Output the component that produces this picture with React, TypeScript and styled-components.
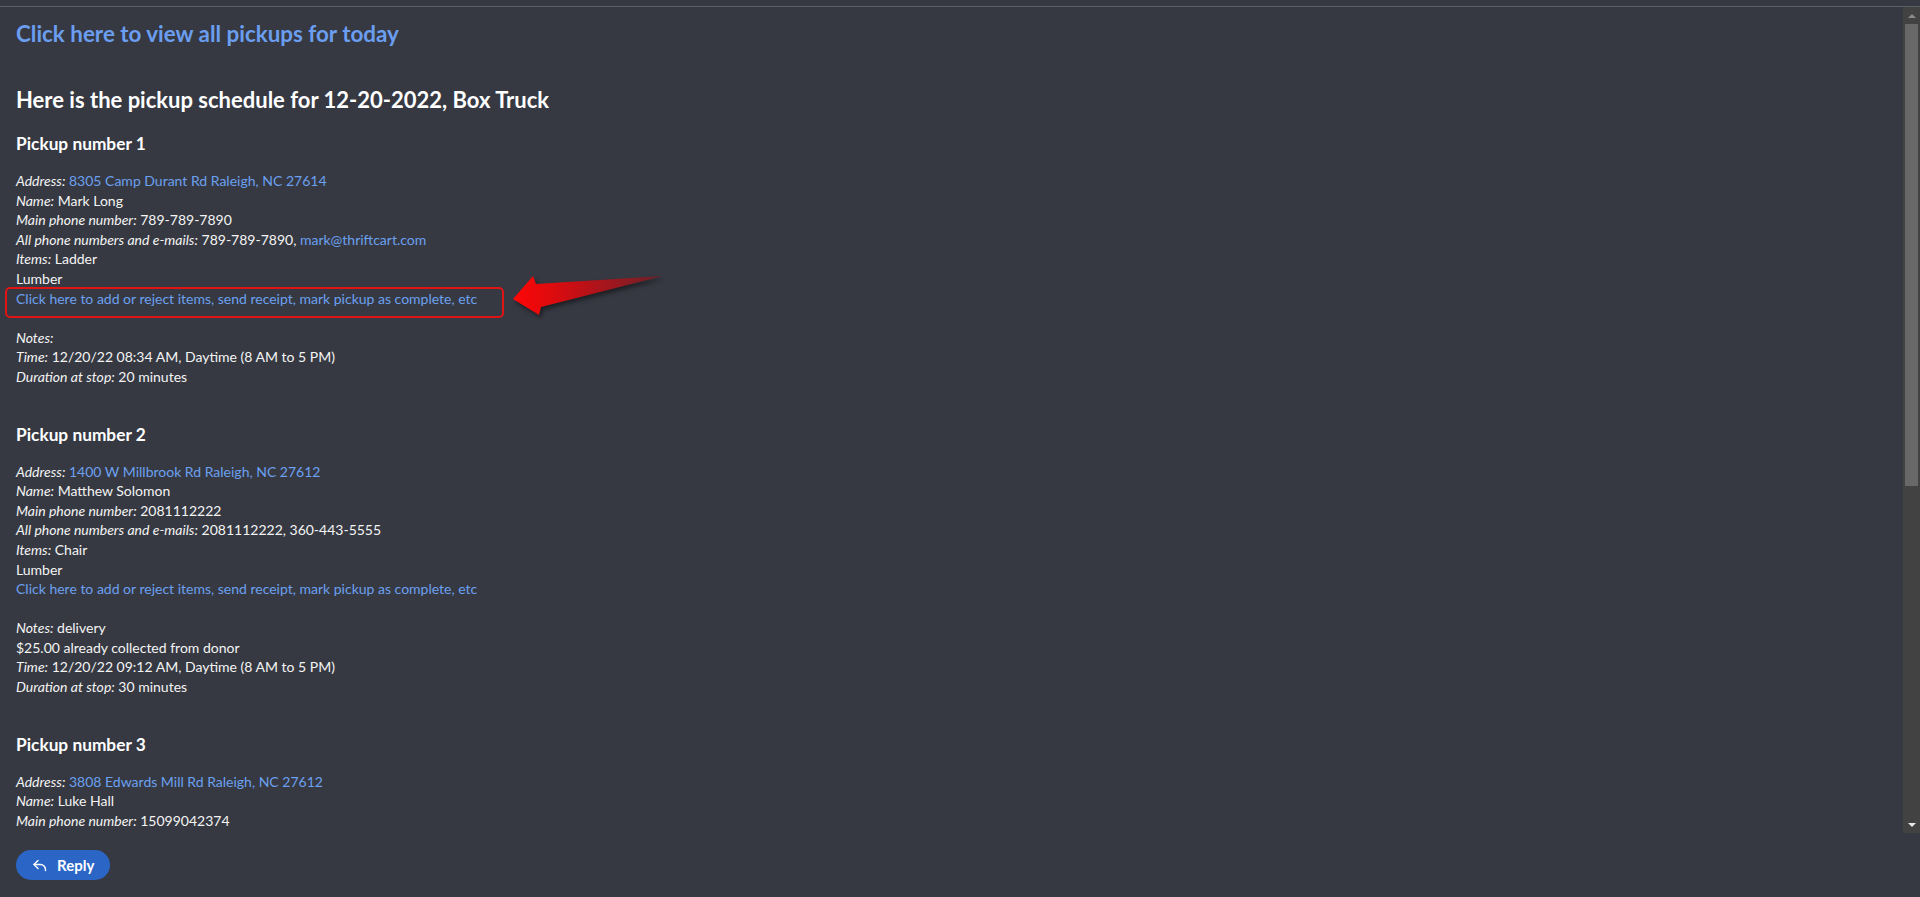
import React from 'react';
import styled, { createGlobalStyle } from 'styled-components';

const GlobalStyle = createGlobalStyle`
  html, body {
    margin: 0;
    padding: 0;
    background: #363942;
    overflow: hidden;
  }
  * {
    box-sizing: border-box;
  }
`

const FONT = `'Lato', 'Noto Sans', sans-serif`

type Pickup = {
  address: string;
  name: string;
  mainPhone: string;
  allPhones?: string;
  email?: string;
  items?: string[];
  notes?: string;
  extra?: string;
  time?: string;
  duration?: string;
  highlighted?: boolean;
};

const pickups: Pickup[] = [
  {
    address: '8305 Camp Durant Rd Raleigh, NC 27614',
    name: 'Mark Long',
    mainPhone: '789-789-7890',
    allPhones: '789-789-7890, ',
    email: 'mark@thriftcart.com',
    items: ['Ladder', 'Lumber'],
    notes: '',
    time: '12/20/22 08:34 AM, Daytime (8 AM to 5 PM)',
    duration: '20 minutes',
    highlighted: true,
  },
  {
    address: '1400 W Millbrook Rd Raleigh, NC 27612',
    name: 'Matthew Solomon',
    mainPhone: '2081112222',
    allPhones: '2081112222, 360-443-5555',
    items: ['Chair', 'Lumber'],
    notes: 'delivery',
    extra: '$25.00 already collected from donor',
    time: '12/20/22 09:12 AM, Daytime (8 AM to 5 PM)',
    duration: '30 minutes',
  },
  {
    address: '3808 Edwards Mill Rd Raleigh, NC 27612',
    name: 'Luke Hall',
    mainPhone: '15099042374',
  },
];

const Page = styled.div`
  height: 897px;
  display: flex;
  flex-direction: column;
  padding-top: 6px;
  font-family: ${FONT};
  color: #f4f4f4;
`

const Rule = styled.div`
  height: 1px;
  background: #5c5f67;
`

const Viewport = styled.div`
  height: 828px;
  display: flex;
  flex-direction: row;
  overflow: hidden;
`

const Content = styled.div`
  flex: 1;
  padding: 14px 16px 0;
  overflow: hidden;
`

const TopLink = styled.a`
  display: block;
  font-size: 22.4px;
  line-height: 26px;
  font-weight: 700;
  color: #6b9ef0;
  text-decoration: none;
`

const Title = styled.h2`
  margin: 40px 0 0;
  font-size: 22px;
  line-height: 26px;
  font-weight: 700;
  color: #ffffff;
`

const Section = styled.section<{ $first?: boolean }>`
  margin-top: ${p => (p.$first ? '21px' : '38px')};
`

const Heading = styled.h3`
  margin: 0;
  font-size: 17.3px;
  line-height: 20px;
  font-weight: 700;
  color: #ffffff;
`

const Details = styled.div`
  margin-top: 17px;
  font-size: 14px;
`

const Line = styled.div`
  height: 19.6px;
  line-height: 19.6px;
  white-space: nowrap;
`

const Label = styled.em`
  font-style: italic;
`

const Link = styled.a`
  color: #6ca0f0;
  text-decoration: none;
`

const Highlight = styled.span`
  position: relative;
  display: inline-block;
  height: 19.6px;

  &::before {
    content: '';
    position: absolute;
    left: -11px;
    top: -2px;
    width: 495px;
    height: 27px;
    border: 2px solid #e01414;
    border-radius: 5px;
  }
`

const Pointer = styled.svg`
  position: absolute;
  left: 489px;
  top: -24px;
  width: 175px;
  height: 62px;
  overflow: visible;
  filter: drop-shadow(2px 3px 2px rgba(0, 0, 0, 0.45));
`

const Scrollbar = styled.div`
  width: 17px;
  background: #424242;
  display: flex;
  flex-direction: column;
  align-items: center;
`

const ScrollArrow = styled.div<{ $down?: boolean }>`
  height: 17px;
  width: 100%;
  display: flex;
  align-items: center;
  justify-content: center;

  &::after {
    content: '';
    width: 0;
    height: 0;
    border-left: 4px solid transparent;
    border-right: 4px solid transparent;
    ${p => (p.$down ? 'border-top: 4px solid #e8e8e8;' : 'border-bottom: 4px solid #8a8a8a;')}
  }
`

const Thumb = styled.div`
  width: 13px;
  height: 462px;
  background: #686868;
`

const Track = styled.div`
  flex: 1;
`

const Footer = styled.div`
  padding: 17px 16px;
`

const ReplyButton = styled.button`
  height: 30px;
  display: inline-flex;
  align-items: center;
  gap: 9px;
  padding: 0 16px 0 16px;
  border: none;
  border-radius: 15px;
  background: #2b66c6;
  color: #ffffff;
  font-family: ${FONT};
  font-size: 15px;
  font-weight: 700;
  cursor: pointer;
`

const ReplyIcon = styled.svg`
  width: 16px;
  height: 16px;
  flex-shrink: 0;
`

function Arrow() {
  return (
    <Pointer viewBox="0 0 175 62">
      <defs>
        <linearGradient id="arrowFill" x1="8" y1="0" x2="158" y2="0" gradientUnits="userSpaceOnUse">
          <stop offset="0" stopColor="#ff0505" />
          <stop offset="0.3" stopColor="#d80c10" />
          <stop offset="0.7" stopColor="#981820" />
          <stop offset="1" stopColor="#6a2229" />
        </linearGradient>
      </defs>
      <polygon points="8,34 28,11 31,19 158,11 36,42 34,50" fill="url(#arrowFill)" />
    </Pointer>
  );
}

const actionText = 'Click here to add or reject items, send receipt, mark pickup as complete, etc';

function PickupBlock({ pickup, index }: { pickup: Pickup; index: number }) {
  const complete = pickup.time !== undefined;
  return (
    <Section $first={index === 0}>
      <Heading>Pickup number {index + 1}</Heading>
      <Details>
        <Line><Label>Address:</Label> <Link href="#">{pickup.address}</Link></Line>
        <Line><Label>Name:</Label> {pickup.name}</Line>
        <Line><Label>Main phone number:</Label> {pickup.mainPhone}</Line>
        {pickup.allPhones && (
          <Line>
            <Label>All phone numbers and e-mails:</Label> {pickup.allPhones}
            {pickup.email && <Link href="#">{pickup.email}</Link>}
          </Line>
        )}
        {pickup.items?.map((item, i) => (
          <Line key={item}>{i === 0 ? <><Label>Items:</Label> {item}</> : item}</Line>
        ))}
        {complete && (
          <>
            <Line>
              {pickup.highlighted ? (
                <Highlight>
                  <Link href="#">{actionText}</Link>
                  <Arrow />
                </Highlight>
              ) : (
                <Link href="#">{actionText}</Link>
              )}
            </Line>
            <Line />
            <Line><Label>Notes:</Label> {pickup.notes}</Line>
            {pickup.extra && <Line>{pickup.extra}</Line>}
            <Line><Label>Time:</Label> {pickup.time}</Line>
            <Line><Label>Duration at stop:</Label> {pickup.duration}</Line>
          </>
        )}
      </Details>
    </Section>
  );
}

export default function App() {
  return (
    <>
      <GlobalStyle />
      <Page>
        <Rule />
        <Viewport>
          <Content>
            <TopLink href="#">Click here to view all pickups for today</TopLink>
            <Title>Here is the pickup schedule for 12-20-2022, Box Truck</Title>
            {pickups.map((p, i) => (
              <PickupBlock key={i} pickup={p} index={i} />
            ))}
          </Content>
          <Scrollbar>
            <ScrollArrow />
            <Thumb />
            <Track />
            <ScrollArrow $down />
          </Scrollbar>
        </Viewport>
        <Footer>
          <ReplyButton>
            <ReplyIcon viewBox="0 0 16 16" fill="none" stroke="currentColor" strokeWidth="1.4" strokeLinecap="round" strokeLinejoin="round">
              <path d="M6 3.5 2 7.5l4 4" />
              <path d="M2 7.5h6.5a5 5 0 0 1 5 5v1" />
            </ReplyIcon>
            Reply
          </ReplyButton>
        </Footer>
      </Page>
    </>
  );
}
